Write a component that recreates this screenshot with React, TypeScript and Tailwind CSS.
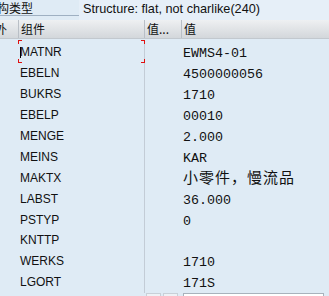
import React from "react";

const rows: [string, string][] = [
  ["MATNR", "EWMS4-01"],
  ["EBELN", "4500000056"],
  ["BUKRS", "1710"],
  ["EBELP", "00010"],
  ["MENGE", "2.000"],
  ["MEINS", "KAR"],
  ["MAKTX", "小零件，慢流品"],
  ["LABST", "36.000"],
  ["PSTYP", "0"],
  ["KNTTP", ""],
  ["WERKS", "1710"],
  ["LGORT", "171S"],
];

const sans = { fontFamily: '"Liberation Sans", "Noto Sans CJK SC", sans-serif' };
const mono = { fontFamily: '"Liberation Mono", "Noto Sans CJK SC", monospace' };
const cjk = { fontFamily: '"Noto Sans CJK SC", sans-serif' };

export default function App() {
  return (
    <div className="w-[329px] h-[296px] overflow-hidden bg-[#dfebf5] text-[#111]" style={sans}>
      {/* top bar */}
      <div className="flex h-[20px]">
        <div className="w-[79px] h-[16px] border-b border-[#9fb0c2] overflow-hidden whitespace-nowrap">
          <span className="block -ml-[3px] text-[12px] leading-[15px]" style={cjk}>构类型</span>
        </div>
        <div className="flex-1 bg-[#e6eff8] pl-[4px] text-[12.7px] leading-[18px] whitespace-nowrap">
          Structure: flat, not charlike(240)
        </div>
      </div>
      {/* header */}
      <div className="flex h-[19px] bg-gradient-to-b from-[#eef0f2] to-[#d3d7db] border-b border-[#c2c8ce] text-[12px] leading-[18px]" style={cjk}>
        <div className="w-[19px] border-r border-[#b9bfc6] overflow-hidden whitespace-nowrap">
          <span className="block -ml-[5px]">外</span>
        </div>
        <div className="w-[126px] border-r border-[#b9bfc6] pl-[2px]">组件</div>
        <div className="w-[37px] border-r border-[#b9bfc6] pl-[2px] whitespace-nowrap">值...</div>
        <div className="flex-1 pl-[2px]">值</div>
      </div>
      {/* body */}
      <div className="relative flex flex-col pt-[3px]">
        {rows.map(([k, v], i) => (
          <div key={k} className="relative flex h-[20.9px] items-center">
            <div className="w-[19px]" />
            <div className="w-[126px] h-full flex items-center pl-[1px] border-r border-[#c3ccd6] text-[12px]">
              {k}
            </div>
            <div className="w-[37px]" />
            <div className="flex-1 pl-[1px] whitespace-nowrap">
              {/[\u4e00-\u9fff]/.test(v) ? (
                <span className="text-[15px] tracking-[1px]" style={cjk}>{v}</span>
              ) : (
                <span className="text-[13.33px]" style={mono}>{v}</span>
              )}
            </div>
            {i === 0 && (
              <>
                <div className="absolute left-[18px] top-[-2px] w-[4px] h-[4px] border-l border-t border-[#e01010]" />
                <div className="absolute left-[141px] top-[-2px] w-[4px] h-[4px] border-r border-t border-[#e01010]" />
                <div className="absolute left-[18px] top-[17px] w-[4px] h-[4px] border-l border-b border-[#e01010]" />
                <div className="absolute left-[141px] top-[17px] w-[4px] h-[4px] border-r border-b border-[#e01010]" />
                <div className="absolute left-[20px] top-[5px] w-[1px] h-[11px] bg-black" />
              </>
            )}
          </div>
        ))}
        <div className="flex h-[10px] pt-[0px]">
          <div className="w-[146px]" />
          <div className="w-[15px] h-[10px] bg-[#eef2f6] border border-[#c8d0d8]" />
          <div className="w-[2px]" />
          <div className="w-[15px] h-[10px] bg-[#eef2f6] border border-[#c8d0d8]" />
          <div className="w-[5px]" />
          <div className="w-[141px] h-[10px] bg-white border border-[#a8b2bc]" />
        </div>
      </div>
    </div>
  );
}
